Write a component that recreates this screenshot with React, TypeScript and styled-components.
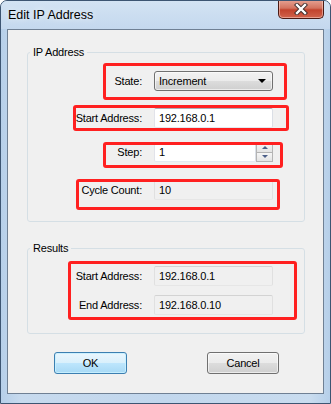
import React from 'react'
import styled, { createGlobalStyle } from 'styled-components'

const GlobalStyle = createGlobalStyle`
    html, body {
        margin: 0;
        padding: 0;
        background: #ffffff;
    }
    body {
        width: 331px;
        height: 404px;
        overflow: hidden;
        font-family: "Liberation Sans", Arial, sans-serif;
        font-size: 11px;
        letter-spacing: -0.2px;
        color: #000;
    }
`

const Window = styled.div`
    width: 331px;
    height: 404px;
    box-sizing: border-box;
    display: flex;
    flex-direction: column;
    border: 1px solid #3d5572;
    border-radius: 7px 7px 0 0;
    background: linear-gradient(90deg, #b6cfe9 0%, #c7daee 6%, #c2d7ed 50%, #c9dcef 94%, #b6cfe9 100%);
    overflow: hidden;
`

const TitleBar = styled.div`
    height: 28px;
    display: flex;
    align-items: flex-start;
    justify-content: space-between;
    padding-left: 7px;
    background: linear-gradient(180deg, #d3e3f3 0%, #c4d8ee 100%);
`

const Title = styled.div`
    padding-top: 6px;
    font-size: 12.5px;
    letter-spacing: 0;
    line-height: 16px;
    color: #000;
    text-shadow: 0 0 6px rgba(255, 255, 255, 0.9);
`

const CloseButton = styled.div`
    width: 44px;
    height: 18px;
    margin-right: 6px;
    margin-top: -1px;
    display: flex;
    align-items: center;
    justify-content: center;
    border: 1px solid #4a1a14;
    border-top: none;
    border-radius: 0 0 5px 5px;
    background: linear-gradient(180deg, #e7a394 0%, #d3735f 45%, #c2432d 55%, #d0634c 100%);
    box-shadow: inset 0 0 0 1px rgba(255, 220, 210, 0.5);
`

const Client = styled.div`
    flex: 1;
    margin: 0 6px 9px 6px;
    border: 1px solid #6f8094;
    background: #f0f0f0;
    padding: 16px 18px 0 19px;
    display: flex;
    flex-direction: column;
`

const Group = styled.fieldset<{ $mt: number; $pb: number }>`
    margin: ${p => p.$mt}px 0 0 0;
    padding: 0 0 ${p => p.$pb}px 0;
    min-width: 0;
    border: 1px solid #d5dfe5;
    border-radius: 3px;
    display: flex;
    flex-direction: column;
    align-items: flex-start;
`

const Legend = styled.legend`
    margin-left: 2px;
    padding: 0 3px;
    line-height: 13px;
    font-size: 11px;
`

const Annot = styled.div<{ $x: number; $w: number; $h: number; $mt: number; $pr: number }>`
    position: relative;
    box-sizing: border-box;
    margin: ${p => p.$mt}px 0 0 ${p => p.$x}px;
    width: ${p => p.$w}px;
    height: ${p => p.$h}px;
    padding: 3px ${p => p.$pr + 3}px 3px 3px;
    display: flex;
    flex-direction: column;
    align-items: flex-end;

    &::after {
        content: '';
        position: absolute;
        inset: 0;
        border: 3px solid #ff2020;
        border-radius: 3px;
        pointer-events: none;
    }
`

const Row = styled.div<{ $dy?: number; $mt?: number }>`
    height: 20px;
    margin-top: ${p => (p.$dy ?? 0) + (p.$mt ?? 0)}px;
    display: flex;
    align-items: center;
    gap: 12px;
`

const Label = styled.span`
    line-height: 13px;
    white-space: nowrap;
`

const Combo = styled.div`
    box-sizing: border-box;
    width: 119px;
    height: 20px;
    padding: 0 6px 0 4px;
    display: flex;
    align-items: center;
    justify-content: space-between;
    border: 1px solid #707070;
    border-radius: 3px;
    background: linear-gradient(180deg, #f2f2f2 0%, #ebebeb 50%, #dddddd 50%, #cfcfcf 100%);
    box-shadow: inset 0 0 0 1px rgba(255, 255, 255, 0.6);
`

const Arrow = styled.span`
    width: 0;
    height: 0;
    border-left: 4px solid transparent;
    border-right: 4px solid transparent;
    border-top: 4px solid #000;
`

const TextBox = styled.div<{ $w?: number; $readOnly?: boolean }>`
    box-sizing: border-box;
    width: ${p => p.$w ?? 119}px;
    height: 20px;
    padding-left: 4px;
    display: flex;
    align-items: center;
    border: 1px solid;
    border-color: ${p => (p.$readOnly ? '#d3d3d3 #e0e0e0 #e6e6e6 #e0e0e0' : '#abadb3 #dbdfe6 #e3e9ef #e2e3ea')};
    border-radius: 2px;
    background: ${p => (p.$readOnly ? '#f0f0f0' : '#ffffff')};
`

const SpinField = styled.div`
    display: flex;
`

const Spin = styled.div`
    width: 17px;
    height: 20px;
    display: flex;
    flex-direction: column;
`

const SpinButton = styled.div<{ $down?: boolean }>`
    flex: 1;
    display: flex;
    align-items: center;
    justify-content: center;
    border: 1px solid #b4b4b4;
    ${p => (p.$down ? 'border-top: none;' : '')}
    background: linear-gradient(180deg, #f6f6f6 0%, #e4e4e4 100%);
`

const SpinArrow = styled.span<{ $down?: boolean }>`
    width: 0;
    height: 0;
    border-left: 3px solid transparent;
    border-right: 3px solid transparent;
    ${p => (p.$down ? 'border-top: 3px solid #4c5f88;' : 'border-bottom: 3px solid #4c5f88;')}
`

const Buttons = styled.div`
    margin: 18px 0 0 27px;
    display: flex;
    gap: 80px;
`

const Button = styled.div<{ $primary?: boolean; $w: number }>`
    box-sizing: border-box;
    width: ${p => p.$w}px;
    height: 22px;
    display: flex;
    align-items: center;
    justify-content: center;
    border: 1px solid ${p => (p.$primary ? '#3c7fb1' : '#707070')};
    border-radius: 3px;
    background: ${p =>
        p.$primary
            ? 'linear-gradient(180deg, #eaf6fd 0%, #d9f0fc 50%, #bee6fd 50%, #a7d9f5 100%)'
            : 'linear-gradient(180deg, #f2f2f2 0%, #ebebeb 50%, #dddddd 50%, #cfcfcf 100%)'};
    box-shadow: inset 0 0 0 1px ${p => (p.$primary ? 'rgba(200, 240, 255, 0.9)' : 'rgba(255, 255, 255, 0.6)')};
`

export default function App() {
    return (
        <>
            <GlobalStyle />
            <Window>
                <TitleBar>
                    <Title>Edit IP Address</Title>
                    <CloseButton>
                        <svg width="14" height="12" viewBox="0 0 14 12">
                            <path d="M3 2 L11 10 M11 2 L3 10" stroke="#3a2a2a" strokeWidth="4.2" strokeLinecap="square" />
                            <path d="M3 2 L11 10 M11 2 L3 10" stroke="#ffffff" strokeWidth="2.4" strokeLinecap="square" />
                        </svg>
                    </CloseButton>
                </TitleBar>
                <Client>
                    <Group $mt={0} $pb={11}>
                        <Legend>IP Address</Legend>
                        <Annot $x={75} $w={184} $h={37} $mt={4} $pr={11}>
                            <Row $dy={5}>
                                <Label>State:</Label>
                                <Combo>
                                    <span>Increment</span>
                                    <Arrow />
                                </Combo>
                            </Row>
                        </Annot>
                        <Annot $x={45} $w={216} $h={26} $mt={5} $pr={13}>
                            <Row>
                                <Label>Start Address:</Label>
                                <TextBox>192.168.0.1</TextBox>
                            </Row>
                        </Annot>
                        <Annot $x={75} $w={180} $h={26} $mt={11} $pr={7}>
                            <Row $dy={-3}>
                                <Label>Step:</Label>
                                <SpinField>
                                    <TextBox $w={102}>1</TextBox>
                                    <Spin>
                                        <SpinButton>
                                            <SpinArrow />
                                        </SpinButton>
                                        <SpinButton $down>
                                            <SpinArrow $down />
                                        </SpinButton>
                                    </Spin>
                                </SpinField>
                            </Row>
                        </Annot>
                        <Annot $x={48} $w={204} $h={31} $mt={11} $pr={4}>
                            <Row $dy={-2}>
                                <Label>Cycle Count:</Label>
                                <TextBox $readOnly>10</TextBox>
                            </Row>
                        </Annot>
                    </Group>
                    <Group $mt={20} $pb={13}>
                        <Legend>Results</Legend>
                        <Annot $x={40} $w={229} $h={59} $mt={6} $pr={21}>
                            <Row $dy={2}>
                                <Label>Start Address:</Label>
                                <TextBox $readOnly>192.168.0.1</TextBox>
                            </Row>
                            <Row $mt={9}>
                                <Label>End Address:</Label>
                                <TextBox $readOnly>192.168.0.10</TextBox>
                            </Row>
                        </Annot>
                    </Group>
                    <Buttons>
                        <Button $primary $w={73}>OK</Button>
                        <Button $w={72}>Cancel</Button>
                    </Buttons>
                </Client>
            </Window>
        </>
    )
}
